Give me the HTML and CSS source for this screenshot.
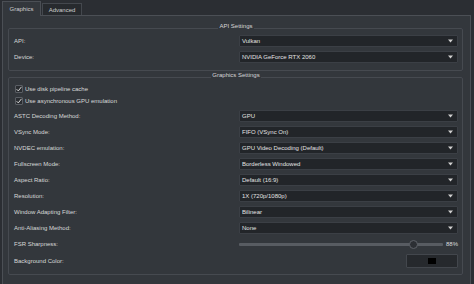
FILE: index.html
```html
<!DOCTYPE html>
<html>
<head>
<meta charset="utf-8">
<link rel="stylesheet" href="styles.css">
</head>
<body>
<div class="tabbar">
  <div class="tab active">Graphics</div>
  <div class="tab">Advanced</div>
</div>
<div class="pane">
  <fieldset class="group api">
    <legend>API Settings</legend>
    <div class="row"><span class="label">API:</span><div class="combo"><span>Vulkan</span><svg class="arrow" viewBox="0 0 5 4" width="5" height="4"><path d="M0 0.5H5L2.5 3.5Z" fill="#d0d0d0"/></svg></div></div>
    <div class="row"><span class="label">Device:</span><div class="combo"><span>NVIDIA GeForce RTX 2060</span><svg class="arrow" viewBox="0 0 5 4" width="5" height="4"><path d="M0 0.5H5L2.5 3.5Z" fill="#d0d0d0"/></svg></div></div>
  </fieldset>
  <fieldset class="group gfx">
    <legend>Graphics Settings</legend>
    <label class="check first"><span class="box"><svg viewBox="0 0 8 8" width="8" height="8"><path d="M1.6 4.2L3.3 5.9L6.5 1.8" stroke="#d8d8d8" stroke-width="1" fill="none"/></svg></span>Use disk pipeline cache</label>
    <label class="check"><span class="box"><svg viewBox="0 0 8 8" width="8" height="8"><path d="M1.6 4.2L3.3 5.9L6.5 1.8" stroke="#d8d8d8" stroke-width="1" fill="none"/></svg></span>Use asynchronous GPU emulation</label>
    <div class="rows">
      <div class="row"><span class="label">ASTC Decoding Method:</span><div class="combo"><span>GPU</span><svg class="arrow" viewBox="0 0 5 4" width="5" height="4"><path d="M0 0.5H5L2.5 3.5Z" fill="#d0d0d0"/></svg></div></div>
      <div class="row"><span class="label">VSync Mode:</span><div class="combo"><span>FIFO (VSync On)</span><svg class="arrow" viewBox="0 0 5 4" width="5" height="4"><path d="M0 0.5H5L2.5 3.5Z" fill="#d0d0d0"/></svg></div></div>
      <div class="row"><span class="label">NVDEC emulation:</span><div class="combo"><span>GPU Video Decoding (Default)</span><svg class="arrow" viewBox="0 0 5 4" width="5" height="4"><path d="M0 0.5H5L2.5 3.5Z" fill="#d0d0d0"/></svg></div></div>
      <div class="row"><span class="label">Fullscreen Mode:</span><div class="combo"><span>Borderless Windowed</span><svg class="arrow" viewBox="0 0 5 4" width="5" height="4"><path d="M0 0.5H5L2.5 3.5Z" fill="#d0d0d0"/></svg></div></div>
      <div class="row"><span class="label">Aspect Ratio:</span><div class="combo"><span>Default (16:9)</span><svg class="arrow" viewBox="0 0 5 4" width="5" height="4"><path d="M0 0.5H5L2.5 3.5Z" fill="#d0d0d0"/></svg></div></div>
      <div class="row"><span class="label">Resolution:</span><div class="combo"><span>1X (720p/1080p)</span><svg class="arrow" viewBox="0 0 5 4" width="5" height="4"><path d="M0 0.5H5L2.5 3.5Z" fill="#d0d0d0"/></svg></div></div>
      <div class="row"><span class="label">Window Adapting Filter:</span><div class="combo"><span>Bilinear</span><svg class="arrow" viewBox="0 0 5 4" width="5" height="4"><path d="M0 0.5H5L2.5 3.5Z" fill="#d0d0d0"/></svg></div></div>
      <div class="row"><span class="label">Anti-Aliasing Method:</span><div class="combo"><span>None</span><svg class="arrow" viewBox="0 0 5 4" width="5" height="4"><path d="M0 0.5H5L2.5 3.5Z" fill="#d0d0d0"/></svg></div></div>
      <div class="row"><span class="label">FSR Sharpness:</span><div class="slider"><div class="groove"><span class="handle" style="left: 85.5%"></span></div><span class="pct">88%</span></div></div>
      <div class="row bg"><span class="label">Background Color:</span><div class="colorcell"><div class="colorbtn"><span class="swatch"></span></div></div></div>
    </div>
  </fieldset>
</div>
</body>
</html>
```

FILE: styles.css
```css
* { box-sizing: border-box; }
html, body { margin: 0; padding: 0; }
body {
  width: 474px;
  height: 284px;
  overflow: hidden;
  background: #2b2e33;
  font-family: "Liberation Sans", Arial, sans-serif;
  font-size: 6px;
  color: #dadada;
}
.tabbar {
  display: flex;
  align-items: flex-end;
  height: 15px;
  padding-left: 2px;
}
.tab {
  width: 40px;
  height: 12px;
  margin-left: 1px;
  background: #272a2e;
  border: 1px solid #44484e;
  border-bottom: none;
  display: flex;
  align-items: center;
  justify-content: center;
  color: #cfcfcf;
}
.tab.active {
  margin-left: 0;
  width: 39px;
  height: 15px;
  background: #33373c;
  border-color: #4b4f55;
  margin-bottom: -1px;
  position: relative;
  z-index: 1;
}
.pane {
  margin-left: 2px;
  width: 469px;
  height: 270px;
  background: #33373c;
  border: 1px solid #4b4f55;
  border-bottom: none;
  padding: 8px 7px 0 5px;
}
.group {
  margin: 0;
  min-width: 0;
  border: 1px solid #464a50;
  border-radius: 2px;
  padding: 3px 4px 7px 5px;
}
.group legend {
  margin: 0 auto;
  padding: 0 1px;
  height: 8px;
  line-height: 8px;
  position: relative;
  top: -2px;
  color: #d6d6d6;
}
.gfx { margin-top: 2px; padding-top: 2px; padding-bottom: 6px; }
.row {
  display: grid;
  grid-template-columns: 1fr 219px;
  align-items: center;
  height: 12px;
}
.api .row + .row { margin-top: 4px; }
.label { color: #d8d8d8; }
.combo {
  height: 12px;
  background: #222529;
  border: 1px solid #3b3f45;
  border-radius: 1px;
  display: flex;
  align-items: center;
  justify-content: space-between;
  padding: 0 4px 0 2px;
  color: #e2e2e2;
}
.arrow { display: block; }
.check {
  display: flex;
  align-items: center;
  height: 12px;
  padding-left: 1px;
  gap: 2px;
}
.box {
  width: 8px;
  height: 8px;
  border: 1px solid #5a5e64;
  background: #2a2d31;
  display: flex;
  align-items: center;
  justify-content: center;
  border-radius: 1px;
}
.box svg { display: block; flex: none; }
.rows {
  display: flex;
  flex-direction: column;
  gap: 4px;
  margin-top: 3px;
}
.slider {
  display: flex;
  align-items: center;
  height: 12px;
}
.groove {
  flex: 1;
  height: 3px;
  background: #585c62;
  border-radius: 1px;
  position: relative;
  margin-right: 3px;
}
.handle {
  position: absolute;
  top: -3px;
  width: 9px;
  height: 9px;
  margin-left: -4px;
  border-radius: 50%;
  background: #2c2f34;
  border: 1px solid #5e6268;
}
.pct { width: 12px; color: #dcdcdc; }
.row.bg { height: 14px; }
.colorcell { display: flex; justify-content: flex-end; }
.colorbtn {
  width: 52px;
  height: 14px;
  background: #26292d;
  border: 1px solid #43474d;
  border-radius: 1px;
  display: flex;
  align-items: center;
  justify-content: center;
}
.swatch {
  width: 8px;
  height: 6px;
  background: #000;
}
```
